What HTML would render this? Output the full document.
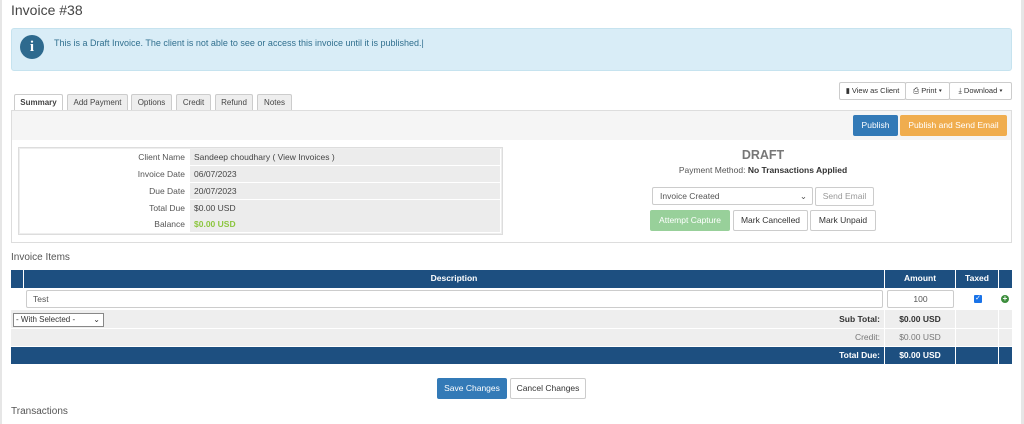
<!DOCTYPE html>
<html><head><style>
*{box-sizing:border-box;margin:0;padding:0}
body{width:1024px;height:424px;overflow:hidden;background:#fff;font-family:"Liberation Sans",sans-serif;color:#333;position:relative;font-size:9px}
.a{position:absolute}
.btn{position:absolute;border:1px solid #ccc;border-radius:2px;background:#fff;text-align:center;font-size:8.5px;color:#333}
.tab{position:absolute;top:94px;height:17px;border:1px solid #ccc;border-bottom:none;background:#eee;font-size:8px;text-align:center;line-height:16px;color:#444;border-radius:2px 2px 0 0}
.lbl{position:absolute;right:0;width:170px;text-align:right;font-size:8.5px;color:#555}
.row{position:absolute;left:171px;width:310px;height:16px;background:#ececec;font-size:8.5px;line-height:16px;padding-left:4px;color:#444}
.blue{background:#1d4f80;color:#fff;font-weight:bold;font-size:8.5px}
</style></head><body>
<div class="a" style="left:0;top:0;width:2px;height:424px;background:#e6e6e6"></div>
<div class="a" style="left:1021px;top:0;width:3px;height:424px;background:#e6e6e6"></div>
<div class="a" style="left:11px;top:2px;font-size:14px;color:#444">Invoice #38</div>
<div class="a" style="left:11px;top:28px;width:1001px;height:43px;background:#d9edf7;border:1px solid #c6e3ef;border-radius:3px"></div>
<div class="a" style="left:20px;top:35px;width:24px;height:24px;border-radius:50%;background:#2e6a8e;color:#fff;font-weight:bold;font-family:'Liberation Serif',serif;font-size:15px;text-align:center;line-height:24px">i</div>
<div class="a" style="left:54px;top:38px;font-size:9px;color:#31708f">This is a Draft Invoice. The client is not able to see or access this invoice until it is published.|</div>

<div class="btn" style="left:839px;top:82px;width:67px;height:18px;line-height:16px;font-size:7.5px">▮ View as Client</div>
<div class="btn" style="left:905px;top:82px;width:45px;height:18px;line-height:16px;font-size:7.5px">⎙ Print ▾</div>
<div class="btn" style="left:949px;top:82px;width:63px;height:18px;line-height:16px;font-size:7.5px">⤓ Download ▾</div>

<div class="tab" style="left:14px;width:49px;background:#fff;font-weight:bold;height:18px">Summary</div>
<div class="tab" style="left:67px;width:61px">Add Payment</div>
<div class="tab" style="left:131px;width:41px">Options</div>
<div class="tab" style="left:176px;width:35px">Credit</div>
<div class="tab" style="left:215px;width:38px">Refund</div>
<div class="tab" style="left:257px;width:35px">Notes</div>

<div class="a" style="left:11px;top:110px;width:1001px;height:133px;border:1px solid #ddd;background:#fff"></div>
<div class="a" style="left:12px;top:111px;width:999px;height:29px;background:#f5f5f5"></div>
<div class="a" style="left:853px;top:115px;width:45px;height:21px;background:#337ab7;border-radius:2px;color:#fff;font-size:8.5px;text-align:center;line-height:21px">Publish</div>
<div class="a" style="left:900px;top:115px;width:107px;height:21px;background:#f0ad4e;border-radius:2px;color:#fff;font-size:8.5px;text-align:center;line-height:21px">Publish and Send Email</div>

<div class="a" style="left:18px;top:147px;width:485px;height:88px;border:1px solid #ddd;box-shadow:0 0 0 1px #eee inset">
 <div class="lbl" style="left:0;width:166px;top:4px">Client Name</div><div class="row" style="top:1px">Sandeep choudhary ( View Invoices )</div>
 <div class="lbl" style="left:0;width:166px;top:21px">Invoice Date</div><div class="row" style="top:18px">06/07/2023</div>
 <div class="lbl" style="left:0;width:166px;top:38px">Due Date</div><div class="row" style="top:35px">20/07/2023</div>
 <div class="lbl" style="left:0;width:166px;top:55px">Total Due</div><div class="row" style="top:52px">$0.00 USD</div>
 <div class="lbl" style="left:0;width:166px;top:71px">Balance</div><div class="row" style="top:68px;color:#8cc63f;font-weight:bold">$0.00 USD</div>
</div>

<div class="a" style="left:700px;top:148px;width:126px;text-align:center;font-size:12.5px;font-weight:bold;color:#777">DRAFT</div>
<div class="a" style="left:650px;top:165px;width:226px;text-align:center;font-size:8.5px;color:#555">Payment Method: <b style="color:#333">No Transactions Applied</b></div>
<div class="a" style="left:652px;top:187px;width:161px;height:18px;border:1px solid #ccc;border-radius:2px;font-size:8.5px;line-height:16px;padding-left:7px;color:#555">Invoice Created<span style="position:absolute;right:5px">⌄</span></div>
<div class="btn" style="left:815px;top:187px;width:59px;height:19px;line-height:17px;color:#999">Send Email</div>
<div class="a" style="left:650px;top:210px;width:80px;height:21px;background:#98d09a;border-radius:2px;color:#fff;font-size:8.5px;text-align:center;line-height:21px">Attempt Capture</div>
<div class="btn" style="left:733px;top:210px;width:75px;height:21px;line-height:19px">Mark Cancelled</div>
<div class="btn" style="left:810px;top:210px;width:66px;height:21px;line-height:19px">Mark Unpaid</div>

<div class="a" style="left:11px;top:252px;font-size:10px;color:#555">Invoice Items</div>
<div class="a blue" style="left:11px;top:270px;width:1001px;height:18px"></div>
<div class="a" style="left:23px;top:270px;width:1px;height:18px;background:#fff"></div>
<div class="a" style="left:884px;top:270px;width:1px;height:18px;background:#fff"></div>
<div class="a" style="left:955px;top:270px;width:1px;height:18px;background:#fff"></div>
<div class="a" style="left:998px;top:270px;width:1px;height:18px;background:#fff"></div>
<div class="a" style="left:24px;top:273px;width:860px;text-align:center;color:#fff;font-weight:bold;font-size:8.5px">Description</div>
<div class="a" style="left:885px;top:273px;width:70px;text-align:center;color:#fff;font-weight:bold;font-size:8.5px">Amount</div>
<div class="a" style="left:956px;top:273px;width:42px;text-align:center;color:#fff;font-weight:bold;font-size:8.5px">Taxed</div>

<div class="a" style="left:26px;top:290px;width:857px;height:18px;border:1px solid #ccc;border-radius:2px;font-size:8.5px;color:#555;padding:3px 6px">Test</div>
<div class="a" style="left:887px;top:290px;width:67px;height:18px;border:1px solid #ccc;border-radius:2px;font-size:8.5px;color:#555;text-align:center;line-height:16px">100</div>
<div class="a" style="left:974px;top:295px;width:8px;height:8px;background:#1a73e8;border-radius:1px;color:#fff;font-size:7px;line-height:8px;text-align:center">✓</div>
<div class="a" style="left:1001px;top:295px;width:8px;height:8px;background:#3c8d3c;border-radius:50%;color:#fff;font-size:8px;line-height:8px;text-align:center;font-weight:bold">+</div>

<div class="a" style="left:11px;top:310px;width:1001px;height:18px;background:#eee"></div>
<div class="a" style="left:11px;top:329px;width:1001px;height:17px;background:#eee"></div>
<div class="a" style="left:884px;top:310px;width:1px;height:36px;background:#fff"></div>
<div class="a" style="left:955px;top:310px;width:1px;height:36px;background:#fff"></div>
<div class="a" style="left:998px;top:310px;width:1px;height:36px;background:#fff"></div>
<div class="a" style="left:13px;top:313px;width:91px;height:14px;border:1px solid #888;background:#fff;font-size:8px;line-height:12px;padding-left:2px">- With Selected -<span style="position:absolute;right:3px">⌄</span></div>
<div class="a" style="left:780px;top:314px;width:100px;text-align:right;font-weight:bold;font-size:8.5px">Sub Total:</div>
<div class="a" style="left:885px;top:314px;width:70px;text-align:center;font-weight:bold;font-size:8.5px">$0.00 USD</div>
<div class="a" style="left:780px;top:332px;width:100px;text-align:right;font-size:8.5px;color:#777">Credit:</div>
<div class="a" style="left:885px;top:332px;width:70px;text-align:center;font-size:8.5px;color:#777">$0.00 USD</div>
<div class="a blue" style="left:11px;top:347px;width:1001px;height:17px"></div>
<div class="a" style="left:884px;top:347px;width:1px;height:17px;background:#fff"></div>
<div class="a" style="left:955px;top:347px;width:1px;height:17px;background:#fff"></div>
<div class="a" style="left:998px;top:347px;width:1px;height:17px;background:#fff"></div>
<div class="a" style="left:780px;top:350px;width:100px;text-align:right;font-weight:bold;font-size:8.5px;color:#fff">Total Due:</div>
<div class="a" style="left:885px;top:350px;width:70px;text-align:center;font-weight:bold;font-size:8.5px;color:#fff">$0.00 USD</div>

<div class="a" style="left:437px;top:378px;width:70px;height:21px;background:#337ab7;border-radius:2px;color:#fff;font-size:8.5px;text-align:center;line-height:21px">Save Changes</div>
<div class="btn" style="left:510px;top:378px;width:76px;height:21px;line-height:19px">Cancel Changes</div>
<div class="a" style="left:11px;top:406px;font-size:10px;color:#555">Transactions</div>
</body></html>
